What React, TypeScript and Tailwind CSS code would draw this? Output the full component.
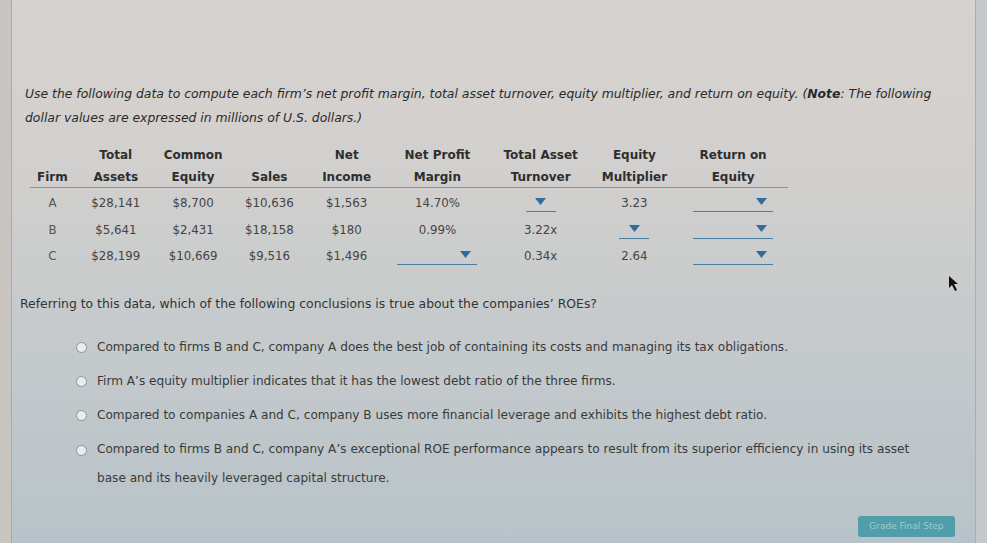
import React from "react";

const Arrow = () => (
  <svg width="11" height="7" viewBox="0 0 11 7" className="block">
    <polygon points="0,0 11,0 5.5,7" fill="#2f6e9c" />
  </svg>
);

const Drop = ({ w }: { w: "short" | "long" }) =>
  w === "short" ? (
    <div className="mx-auto flex h-[16px] w-[30px] items-start justify-center border-b-[1.5px] border-[#4a7ea3] pt-[2px]">
      <Arrow />
    </div>
  ) : (
    <div className="mx-auto flex h-[16px] w-[80px] items-start justify-end border-b-[1.5px] border-[#4a7ea3] pr-[6px] pt-[2px]">
      <Arrow />
    </div>
  );

const Radio = () => (
  <span className="inline-block h-[11px] w-[11px] shrink-0 rounded-full border-[1.5px] border-[#8a9298] bg-[#e8eef0]" />
);

export default function App() {
  const cols = [45, 82, 73, 80, 75, 107, 100, 88, 110];
  const rows: (string | React.ReactNode)[][] = [
    ["A", "$28,141", "$8,700", "$10,636", "$1,563", "14.70%", <Drop w="short" />, "3.23", <Drop w="long" />],
    ["B", "$5,641", "$2,431", "$18,158", "$180", "0.99%", "3.22x", <Drop w="short" />, <Drop w="long" />],
    ["C", "$28,199", "$10,669", "$9,516", "$1,496", <Drop w="long" />, "0.34x", "2.64", <Drop w="long" />],
  ];
  const head: [string, string][] = [
    ["", "Firm"],
    ["Total", "Assets"],
    ["Common", "Equity"],
    ["", "Sales"],
    ["Net", "Income"],
    ["Net Profit", "Margin"],
    ["Total Asset", "Turnover"],
    ["Equity", "Multiplier"],
    ["Return on", "Equity"],
  ];
  return (
    <div className="flex h-[543px] w-[987px] overflow-hidden bg-[linear-gradient(180deg,#d6d2ce_0%,#d2d0ce_30%,#c6cacc_60%,#b8c3c9_100%)] font-['DejaVu_Sans',Verdana,sans-serif] text-[#333]">
      <div className="w-[12px] shrink-0 border-r border-[#a9a8a4] bg-[#c9c5c0]" />
      <div className="relative flex min-w-0 flex-1 flex-col pl-[13px] pt-[82px]">
        <p className="whitespace-nowrap text-[12.4px] italic leading-[24px] text-[#2a2a2a]">
          Use the following data to compute each firm’s net profit margin, total asset turnover, equity multiplier, and
          return on equity. (<b>Note</b>: The following
          <br />
          dollar values are expressed in millions of U.S. dollars.)
        </p>

        <div className="ml-[5px] mt-[14px] w-[758px]">
          <div className="flex border-b-[1.5px] border-[#8d8f90] text-[12px] font-bold text-[#2e2e2e]">
            {head.map((h, i) => (
              <div key={i} style={{ width: cols[i] }} className="flex flex-col items-center leading-[22px]">
                <span className="h-[22px] whitespace-nowrap">{h[0]}</span>
                <span className="h-[21px] whitespace-nowrap">{h[1]}</span>
              </div>
            ))}
          </div>
          <div className="pt-[3px]">
            {rows.map((r, ri) => (
              <div key={ri} className="flex h-[26.5px] items-center text-[11.8px] text-[#444]">
                {r.map((c, ci) => (
                  <div key={ci} style={{ width: cols[ci] }} className={ci === 0 ? "text-center text-[#555]" : "text-center"}>
                    {c}
                  </div>
                ))}
              </div>
            ))}
          </div>
        </div>

        <p className="ml-[-5px] mt-[24px] whitespace-nowrap text-[12.4px] text-[#333]">
          Referring to this data, which of the following conclusions is true about the companies’ ROEs?
        </p>

        <div className="ml-[51px] mt-[26px] flex flex-col gap-[17px] text-[12.1px] leading-[17px] text-[#3a3a3a]">
          <div className="flex items-center gap-[10px]">
            <Radio />
            <span className="whitespace-nowrap">Compared to firms B and C, company A does the best job of containing its costs and managing its tax obligations.</span>
          </div>
          <div className="flex items-center gap-[10px]">
            <Radio />
            <span className="whitespace-nowrap">Firm A’s equity multiplier indicates that it has the lowest debt ratio of the three firms.</span>
          </div>
          <div className="flex items-center gap-[10px]">
            <Radio />
            <span className="whitespace-nowrap">Compared to companies A and C, company B uses more financial leverage and exhibits the highest debt ratio.</span>
          </div>
          <div className="flex items-start gap-[10px]">
            <span className="mt-[3px]">
              <Radio />
            </span>
            <span className="mt-[-6px] leading-[29px]">
              Compared to firms B and C, company A’s exceptional ROE performance appears to result from its superior efficiency in using its asset
              <br />
              base and its heavily leveraged capital structure.
            </span>
          </div>
        </div>

        <div className="absolute left-[846px] top-[516px] flex h-[21px] w-[97px] items-center justify-center rounded-[3px] bg-[#4f9eaa] text-[9px] text-[#9fcad0]">
          Grade Final Step
        </div>

        <svg className="absolute left-[936px] top-[276px]" width="12" height="16" viewBox="0 0 12 16">
          <polygon points="1,0 1,12 4,9 7,15 9,14 6,8 10,8" fill="#111" />
        </svg>
      </div>
      <div className="w-[12px] shrink-0 border-l border-[#a8adb0] bg-[#c4c8ca]" />
    </div>
  );
}
